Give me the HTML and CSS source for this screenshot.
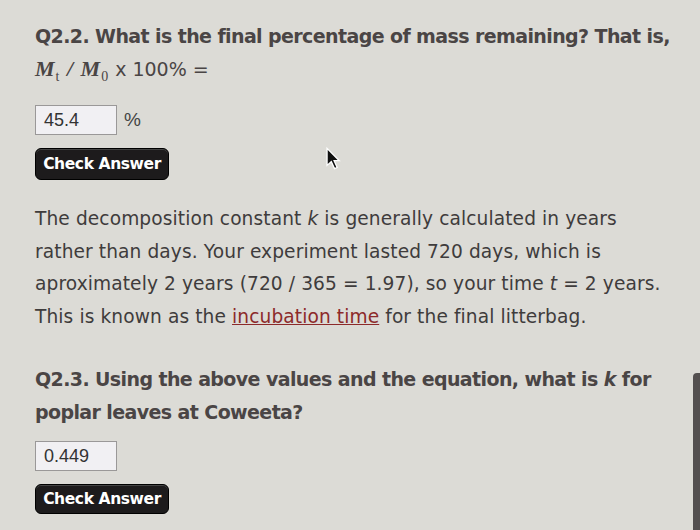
FILE: index.html
```html
<!DOCTYPE html>
<html>
<head>
<meta charset="utf-8">
<link rel="stylesheet" href="styles.css">
</head>
<body>
<div class="page">
  <h2 class="question">Q2.2. What is the final percentage of mass remaining? That is,<br>
    <span class="math">M<sub>t</sub> / M<sub>0</sub></span> <span class="plain">x 100% =</span></h2>
  <div class="answer-row">
    <div class="input">45.4</div><span class="unit">%</span>
  </div>
  <button class="check">Check Answer</button>

  <p class="text">The decomposition constant <i class="var">k</i> is generally calculated in years<br>
  rather than days. Your experiment lasted 720 days, which is<br>
  aproximately 2 years (720 / 365 = 1.97), so your time <i class="var">t</i> = 2 years.<br>
  This is known as the <a class="link">incubation time</a> for the final litterbag.</p>

  <h2 class="question q2">Q2.3. Using the above values and the equation, what is <i class="var">k</i> for<br>
  poplar leaves at Coweeta?</h2>
  <div class="answer-row r2">
    <div class="input">0.449</div>
  </div>
  <button class="check last">Check Answer</button>
</div>
<svg class="cursor" width="17" height="24" viewBox="0 0 16 22"><path d="M1 1 L1 17 L5 13.5 L8 20 L10.5 19 L7.6 12.6 L12.5 12.6 Z" fill="#111" stroke="#fff" stroke-width="1.2"/></svg>
<div class="scrollbar"></div>
</body>
</html>
```
FILE: styles.css
```css
html, body { margin: 0; padding: 0; }
body {
  width: 700px; height: 530px; overflow: hidden; position: relative;
  background: #dcdbd6;
  color: #474343;
  font-family: "DejaVu Sans", "Noto Sans", sans-serif;
}
.page { padding: 20px 0 0 35px; }
.question {
  margin: 0; font-size: 19px; font-weight: bold; line-height: 33px;
  letter-spacing: -0.6px; color: #4a4545;
}
.math {
  font-family: "Liberation Serif", serif; font-style: italic; font-weight: bold;
  font-size: 22px; letter-spacing: 1px; line-height: 0;
}
.math sub { font-style: normal; font-size: 14px; font-weight: normal; line-height: 0; }
.plain { font-weight: normal; font-size: 19px; letter-spacing: 0; }
.answer-row { display: flex; align-items: center; margin-top: 19px; gap: 7px; }
.input {
  width: 72px; height: 28px; border: 1px solid #9a9898; background: #f1f0f3;
  font-family: "Liberation Sans", sans-serif; font-size: 18px; color: #333;
  padding-left: 8px; line-height: 28px;
}
.unit { font-family: "Liberation Sans", sans-serif; font-size: 19px; color: #444; }
.check {
  display: block; margin-top: 13px; width: 134px; height: 32px;
  background: #1d1b1c; color: #fff; border: 1px solid #000; border-radius: 6px;
  font-family: "DejaVu Sans", sans-serif; font-weight: bold; font-size: 15.5px;
  letter-spacing: -0.4px; padding: 0;
  box-shadow: inset 0 1px 0 #444;
}
.check.last { height: 30px; }
.text {
  margin: 23px 0 0; font-size: 18.6px; line-height: 32.5px; letter-spacing: 0.1px;
  color: #3f3c3c;
}
.var { font-style: italic; }
.link { color: #8c2a2a; text-decoration: underline; }
.q2 { margin-top: 30px; }
.r2 { margin-top: 12px; }
.cursor { position: absolute; left: 326px; top: 147px; }
.scrollbar {
  position: absolute; left: 693px; top: 373px; width: 8px; height: 160px;
  background: #545050; border-radius: 4px 0 0 0;
}
```
